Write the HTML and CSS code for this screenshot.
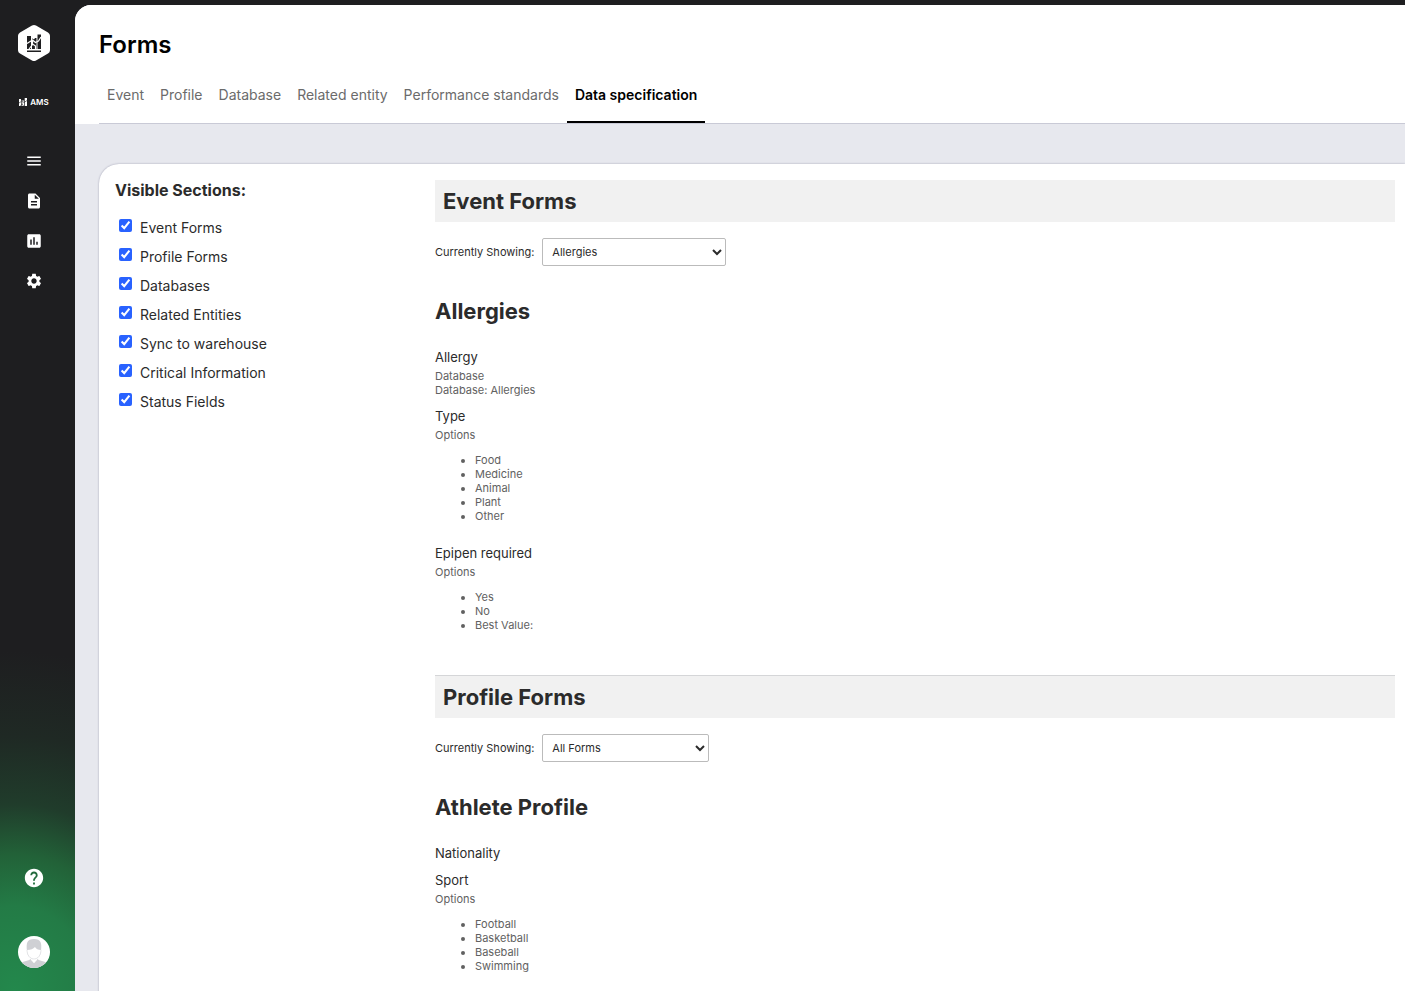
FILE: index.html
```html
<!DOCTYPE html>
<html lang="en">
<head>
    <meta charset="UTF-8">
    <meta name="viewport" content="width=device-width, initial-scale=1.0">
    <title>Forms</title>
    <link rel="stylesheet" href="styles.css">
</head>
<body>
    <div class="app">
        <!-- Sidebar -->
        <nav class="sidebar">
            <a class="logo" href="#" aria-label="Home">
                <svg width="32" height="36" viewBox="0 0 32 36">
                    <path d="M14 .6a4 4 0 0 1 4 0l12 6.8a4 4 0 0 1 2 3.500v14.200a4 4 0 0 1-2 3.500l-12 6.800a4 4 0 0 1-4 0l-12-6.800a4 4 0 0 1-2-3.500v-14.200a4 4 0 0 1 2-3.500z" fill="#fff"/>
                    <path d="M9 11h4v13H9zM14 13h4.500v11H14zM19.500 9.500H23V24h-3.500zM9 25.500h14V27H9z" fill="#1e1e20"/>
                    <path d="M9 18.500l5.500-3.500 3 2.500 3-1.500 2.500-4M14.500 15v4.500L11 24M14.500 19l3 2v3" fill="none" stroke="#fff" stroke-width="1.200"/>
                    <circle cx="15.500" cy="13" r="1.300" fill="#fff"/>
                </svg>
            </a>
            <a class="product" href="#">
                <svg width="8" height="8" viewBox="0 0 8 8">
                    <path d="M0 1h2v7H0zM2.500 2.500H5V8H2.500zM5.700 0H8v8H5.700z" fill="#fff"/>
                    <path d="M0 5l3-2 2 1.500 3-2M3 4v2L1.500 8M3 6l1.500 2" fill="none" stroke="#1e1e20" stroke-width=".6"/>
                </svg>
                <span>AMS</span>
            </a>
            <div class="menu">
                <button type="button" aria-label="Menu">
                    <svg width="18" height="18" viewBox="0 0 24 24"><path d="M3 18h18v-2H3v2zm0-5h18v-2H3v2zm0-7v2h18V6H3z"/></svg>
                </button>
                <a href="#" aria-label="Forms">
                    <svg width="18" height="18" viewBox="0 0 24 24"><path d="M14 2H6c-1.100 0-2 .9-2 2v16c0 1.100.9 2 2 2h12c1.100 0 2-.9 2-2V8l-6-6zm2 16H8v-2h8v2zm0-4H8v-2h8v2zm-3-5V3.500L18.500 9H13z"/></svg>
                </a>
                <a href="#" aria-label="Reports">
                    <svg width="18" height="18" viewBox="0 0 24 24"><path d="M19 3H5c-1.100 0-2 .9-2 2v14c0 1.100.9 2 2 2h14c1.100 0 2-.9 2-2V5c0-1.100-.9-2-2-2zM9 17H7V10h2v7zm4 0h-2V7h2v10zm4 0h-2v-4h2v4z"/></svg>
                </a>
                <a href="#" aria-label="Settings">
                    <svg width="18" height="18" viewBox="0 0 24 24"><path d="M19.140 12.940c.04-.3.060-.61.060-.94 0-.32-.02-.64-.07-.94l2.030-1.580c.18-.14.230-.41.120-.61l-1.920-3.320c-.12-.22-.37-.29-.59-.22l-2.390.96c-.5-.38-1.030-.7-1.620-.94l-.36-2.540c-.04-.24-.24-.41-.48-.41h-3.840c-.24 0-.43.170-.47.410l-.36 2.540c-.59.240-1.130.570-1.620.940l-2.390-.96c-.22-.08-.47 0-.59.220L2.740 8.870c-.12.210-.08.470.120.610l2.030 1.580c-.05.300-.09.630-.09.940s.02.640.070.940l-2.030 1.580c-.18.140-.23.410-.12.610l1.920 3.320c.12.220.37.290.59.220l2.390-.96c.5.380 1.030.7 1.620.94l.36 2.540c.05.240.24.410.48.410h3.840c.24 0 .44-.17.470-.41l.36-2.540c.59-.24 1.130-.56 1.620-.94l2.390.96c.22.080.47 0 .59-.22l1.920-3.320c.12-.22.070-.47-.12-.61l-2.010-1.580zM12 15.600c-1.980 0-3.600-1.620-3.600-3.600s1.620-3.600 3.600-3.600 3.600 1.620 3.600 3.600-1.620 3.600-3.600 3.600z"/></svg>
                </a>
            </div>
            <div class="account">
                <a class="help" href="#" aria-label="Help">
                    <svg width="22" height="22" viewBox="0 0 24 24"><path d="M12 2C6.480 2 2 6.480 2 12s4.480 10 10 10 10-4.480 10-10S17.520 2 12 2zm1 17h-2v-2h2v2zm2.070-7.750l-.9.920C13.450 12.900 13 13.500 13 15h-2v-.5c0-1.100.450-2.100 1.170-2.830l1.240-1.260c.37-.36.590-.86.590-1.410 0-1.100-.9-2-2-2s-2 .9-2 2H8c0-2.210 1.790-4 4-4s4 1.790 4 4c0 .88-.36 1.680-.93 2.250z"/></svg>
                </a>
                <button type="button" class="avatar" aria-label="Account">
                    <svg width="32" height="32" viewBox="0 0 32 32">
                        <path d="M3 32v-5c3-2 7-2 10-4l3 4 3-4c3 2 7 2 10 4v5z" fill="#cfd0d4"/>
                        <path d="M13 20h6v4l-3 3-3-3z" fill="#fff"/>
                        <path d="M9 15C8 7 9 3 16 3s8 4 7 12c0 4-3 8-7 8s-7-4-7-8z" fill="#cfd0d4"/>
                        <path d="M9 14c4 0 6-1 8-3 1 2 3 3 6 3 0 5-3 9-7 9s-7-4-7-9z" fill="#fff"/>
                        <path d="M9 14c0 5 3 9 7 9s7-4 7-9" fill="none" stroke="#dddee1" stroke-width=".7"/>
                    </svg>
                </button>
            </div>
        </nav>

        <main class="page">
            <header class="page-header">
                <h1>Forms</h1>
                <nav class="tabs">
                    <a href="#">Event</a>
                    <a href="#">Profile</a>
                    <a href="#">Database</a>
                    <a href="#">Related entity</a>
                    <a href="#">Performance standards</a>
                    <a href="#" class="active">Data specification</a>
                </nav>
            </header>

            <div class="card">
                <!-- Section filter -->
                <aside class="filters">
                    <h2>Visible Sections:</h2>
                    <label><input type="checkbox" checked> Event Forms</label>
                    <label><input type="checkbox" checked> Profile Forms</label>
                    <label><input type="checkbox" checked> Databases</label>
                    <label><input type="checkbox" checked> Related Entities</label>
                    <label><input type="checkbox" checked> Sync to warehouse</label>
                    <label><input type="checkbox" checked> Critical Information</label>
                    <label><input type="checkbox" checked> Status Fields</label>
                </aside>

                <div class="sections">
                    <section>
                        <h2>Event Forms</h2>
                        <div class="showing">
                            <label for="event-form">Currently Showing:</label>
                            <select id="event-form" class="wide">
                                <option>Allergies</option>
                            </select>
                        </div>
                        <h3>Allergies</h3>
                        <div class="field">
                            <h4>Allergy</h4>
                            <p>Database</p>
                            <p>Database: Allergies</p>
                        </div>
                        <div class="field">
                            <h4>Type</h4>
                            <p>Options</p>
                            <ul>
                                <li>Food</li>
                                <li>Medicine</li>
                                <li>Animal</li>
                                <li>Plant</li>
                                <li>Other</li>
                            </ul>
                        </div>
                        <div class="field">
                            <h4>Epipen required</h4>
                            <p>Options</p>
                            <ul>
                                <li>Yes</li>
                                <li>No</li>
                                <li>Best Value:</li>
                            </ul>
                        </div>
                    </section>

                    <section>
                        <h2>Profile Forms</h2>
                        <div class="showing">
                            <label for="profile-form">Currently Showing:</label>
                            <select id="profile-form">
                                <option>All Forms</option>
                            </select>
                        </div>
                        <h3>Athlete Profile</h3>
                        <div class="field">
                            <h4>Nationality</h4>
                        </div>
                        <div class="field">
                            <h4>Sport</h4>
                            <p>Options</p>
                            <ul>
                                <li>Football</li>
                                <li>Basketball</li>
                                <li>Baseball</li>
                                <li>Swimming</li>
                            </ul>
                        </div>
                    </section>
                </div>
            </div>
        </main>
    </div>
</body>
</html>
```

FILE: styles.css
```css
* {
    box-sizing: border-box;
}
body {
    margin: 0;
    font-family: Inter, "Liberation Sans", sans-serif;
    font-size: 14px;
    color: #2b2b2b;
    background-color: #1e1e20;
}
h1, h2, h3, h4, p {
    margin: 0;
}
a {
    color: inherit;
    text-decoration: none;
}
button {
    padding: 0;
    border: none;
    background: none;
    cursor: pointer;
}
svg {
    display: block;
}
.app {
    display: flex;
    height: 100vh;
    overflow: hidden;
}

/* Sidebar */
.sidebar {
    flex: none;
    display: flex;
    flex-direction: column;
    width: 75px;
    padding: 25px 7px 23px 0;
    align-items: center;
    background: radial-gradient(ellipse 300px 340px at 15px 100%, #23884c 0%, #237b46 25%, #226238 40%, #203c2b 55%, #1f2924 75%, #1e1e20 100%);
}
.product {
    display: flex;
    align-items: center;
    gap: 3px;
    margin-top: 35px;
    color: #fff;
    font-size: 8px;
    line-height: 12px;
    font-weight: 600;
}
.menu {
    display: flex;
    flex-direction: column;
    gap: 22px;
    margin-top: 44px;
    fill: #fff;
}
.menu button {
    fill: #fff;
}
.account {
    display: flex;
    flex-direction: column;
    align-items: center;
    gap: 47px;
    margin-top: auto;
    fill: #fff;
}
.avatar {
    width: 32px;
    height: 32px;
    border-radius: 50%;
    background-color: #fff;
    overflow: hidden;
}

/* Page */
.page {
    flex: 1;
    min-width: 0;
    display: flex;
    flex-direction: column;
    margin-top: 5px;
    border-top-left-radius: 16px;
    background-color: #e7e8ee;
    overflow: hidden;
}
.page-header {
    padding: 24px 0 0 24px;
    background-color: #fff;
}
.page-header h1 {
    font-size: 24px;
    line-height: 32px;
    font-weight: 600;
    color: #000;
}
.tabs {
    display: flex;
    border-bottom: 1px solid #c9cad6;
}
.tabs a {
    padding: 24px 8px 16px;
    border-bottom: 2px solid transparent;
    line-height: 20px;
    color: #6b6b6b;
}
.tabs .active {
    border-color: #000;
    font-weight: 600;
    color: #000;
}
.card {
    flex: 1 0 auto;
    display: flex;
    margin: 40px 0 0 24px;
    padding: 16px 10px 16px 16px;
    border-top-left-radius: 20px;
    background-color: #fff;
    box-shadow: 0 0 2px rgba(40, 40, 80, 0.4);
}

/* Section filter */
.filters {
    flex: none;
    width: 320px;
}
.filters h2 {
    margin-bottom: 18px;
    font-size: 16px;
    line-height: 20px;
}
.filters label {
    display: flex;
    gap: 8px;
    margin-bottom: 9px;
    line-height: 20px;
}
.filters input {
    width: 13px;
    height: 13px;
    margin: 1px 0 0 4px;
    accent-color: #2962ff;
}

/* Form sections */
.sections {
    flex: 1;
}
section + section {
    margin-top: 43px;
    border-top: 1px solid #d5d6d8;
}
section h2 {
    padding: 8px;
    font-size: 22px;
    line-height: 26px;
    background-color: #f1f1f1;
}
.showing {
    display: flex;
    align-items: center;
    gap: 8px;
    margin-top: 16px;
    font-size: 11px;
}
.showing select {
    width: 167px;
    height: 28px;
    padding: 0 5px;
    border: 1px solid #bbb;
    border-radius: 2px;
    background-color: #fff;
    font: inherit;
    color: inherit;
}
.showing .wide {
    width: 184px;
}
section h3 {
    margin: 32px 0 25px;
    font-size: 22px;
    line-height: 26px;
}
.field {
    margin-bottom: 11px;
}
.field h4 {
    margin-bottom: 4px;
    font-size: 13px;
    line-height: 16px;
    font-weight: 400;
}
.field p,
.field ul {
    font-size: 11px;
    line-height: 14px;
    color: #616161;
}
.field ul {
    margin: 11px 0 22px;
    padding-left: 40px;
}
```
